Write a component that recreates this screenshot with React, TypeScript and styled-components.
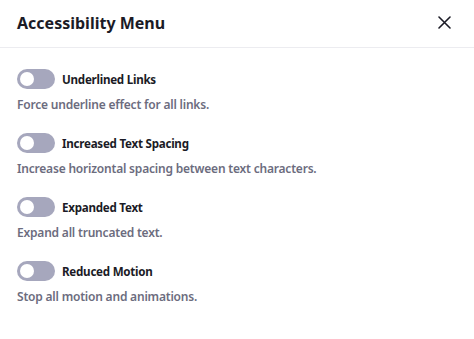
import React, { useState } from "react";
import styled, { createGlobalStyle } from "styled-components";

const Global = createGlobalStyle`
  html, body { margin: 0; padding: 0; background: #fff; }
  body { font-family: "Noto Sans", "Open Sans", sans-serif; color: #1b1b26; }
  * { box-sizing: border-box; }
`;

const Panel = styled.div`
  width: 474px;
  height: 339px;
  background: #fff;
  display: flex;
  flex-direction: column;
`;

const Header = styled.header`
  height: 48px;
  display: flex;
  align-items: center;
  justify-content: space-between;
  padding: 0 22px 2px 17px;
  border-bottom: 1px solid #ececf0;
`;

const Title = styled.h1`
  margin: 0;
  font-size: 16px;
  font-weight: 700;
  color: #1b1b26;
`;

const CloseButton = styled.button`
  border: 0;
  background: none;
  padding: 0;
  width: 16px;
  height: 16px;
  display: flex;
  align-items: center;
  justify-content: center;
  cursor: pointer;
  color: #1b1b26;
`;

const List = styled.div`
  display: flex;
  flex-direction: column;
  gap: 20px;
  padding: 21px 17px;
`;

const Item = styled.div`
  display: flex;
  flex-direction: column;
  gap: 8px;
`;

const Row = styled.label`
  display: flex;
  align-items: center;
  gap: 7px;
  cursor: pointer;
`;

const Track = styled.span<{ $on: boolean }>`
  width: 38px;
  height: 20px;
  border-radius: 10px;
  background: ${(p) => (p.$on ? "#4b4fd6" : "#a6a7bd")};
  position: relative;
  flex-shrink: 0;
`;

const Knob = styled.span<{ $on: boolean }>`
  position: absolute;
  top: 3px;
  left: ${(p) => (p.$on ? "21px" : "3px")};
  width: 14px;
  height: 14px;
  border-radius: 50%;
  background: #fff;
`;

const Label = styled.span`
  font-size: 11.6px;
  font-weight: 700;
  letter-spacing: -0.25px;
  color: #1b1b26;
`;

const Desc = styled.p`
  margin: 0;
  font-size: 12px;
  line-height: 16px;
  letter-spacing: -0.2px;
  font-weight: 600;
  color: #6c6c7e;
`;

const items = [
  { label: "Underlined Links", desc: "Force underline effect for all links." },
  { label: "Increased Text Spacing", desc: "Increase horizontal spacing between text characters." },
  { label: "Expanded Text", desc: "Expand all truncated text." },
  { label: "Reduced Motion", desc: "Stop all motion and animations." },
];

export default function App() {
  const [on, setOn] = useState<boolean[]>([false, false, false, false]);
  return (
    <>
      <Global />
      <Panel>
        <Header>
          <Title>Accessibility Menu</Title>
          <CloseButton aria-label="Close">
            <svg width="13" height="13" viewBox="0 0 13 13" fill="none" stroke="currentColor" strokeWidth="1.6" strokeLinecap="round">
              <path d="M1 1 L12 12 M12 1 L1 12" />
            </svg>
          </CloseButton>
        </Header>
        <List>
          {items.map((it, i) => (
            <Item key={it.label}>
              <Row onClick={() => setOn((s) => s.map((v, j) => (j === i ? !v : v)))}>
                <Track $on={on[i]}>
                  <Knob $on={on[i]} />
                </Track>
                <Label>{it.label}</Label>
              </Row>
              <Desc>{it.desc}</Desc>
            </Item>
          ))}
        </List>
      </Panel>
    </>
  );
}
